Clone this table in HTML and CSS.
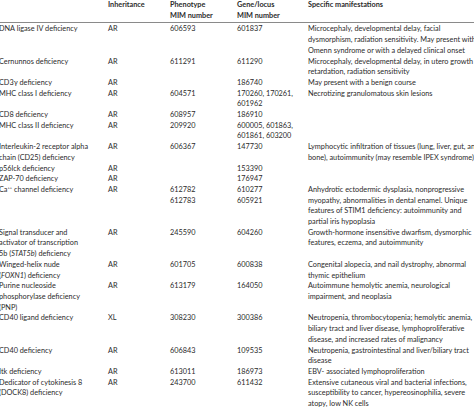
FILE: index.html
```html
<!DOCTYPE html>
<html>
<head>
<meta charset="utf-8">
<link rel="stylesheet" href="styles.css">
</head>
<body>
<table class="tbl">
<colgroup>
<col class="c1"><col class="c2"><col class="c3"><col class="c4"><col class="c5">
</colgroup>
<thead>
<tr><th></th><th>Inheritance</th><th>Phenotype<br>MIM number</th><th>Gene/locus<br>MIM number</th><th>Specific manifestations</th></tr>
</thead>
<tbody>
<tr><td>DNA ligase IV deficiency</td><td>AR</td><td>606593</td><td>601837</td><td>Microcephaly, developmental delay, facial<br>dysmorphism, radiation sensitivity. May present with<br>Omenn syndrome or with a delayed clinical onset</td></tr>
<tr><td>Cernunnos deficiency</td><td>AR</td><td>611291</td><td>611290</td><td>Microcephaly, developmental delay, in utero growth<br>retardation, radiation sensitivity</td></tr>
<tr><td>CD3γ deficiency</td><td>AR</td><td></td><td>186740</td><td>May present with a benign course</td></tr>
<tr><td>MHC class I deficiency</td><td>AR</td><td>604571</td><td>170260, 170261,<br>601962</td><td>Necrotizing granulomatous skin lesions</td></tr>
<tr><td>CD8 deficiency</td><td>AR</td><td>608957</td><td>186910</td><td></td></tr>
<tr><td>MHC class II deficiency</td><td>AR</td><td>209920</td><td>600005, 601863,<br>601861, 603200</td><td></td></tr>
<tr><td>Interleukin-2 receptor alpha<br>chain (CD25) deficiency</td><td>AR</td><td>606367</td><td>147730</td><td>Lymphocytic infiltration of tissues (lung, liver, gut, and<br>bone), autoimmunity (may resemble IPEX syndrome)</td></tr>
<tr><td>p56lck deficiency</td><td>AR</td><td></td><td>153390</td><td></td></tr>
<tr><td>ZAP-70 deficiency</td><td>AR</td><td></td><td>176947</td><td></td></tr>
<tr><td>Ca<sup>++</sup> channel deficiency</td><td>AR</td><td>612782<br>612783</td><td>610277<br>605921</td><td>Anhydrotic ectodermic dysplasia, nonprogressive<br>myopathy, abnormalities in dental enamel. Unique<br>features of STIM1 deficiency: autoimmunity and<br>partial iris hypoplasia</td></tr>
<tr><td>Signal transducer and<br>activator of transcription<br>5b (<i>STAT5b</i>) deficiency</td><td>AR</td><td>245590</td><td>604260</td><td>Growth-hormone insensitive dwarfism, dysmorphic<br>features, eczema, and autoimmunity</td></tr>
<tr><td>Winged-helix nude<br>(<i>FOXN1</i>) deficiency</td><td>AR</td><td>601705</td><td>600838</td><td>Congenital alopecia, and nail dystrophy, abnormal<br>thymic epithelium</td></tr>
<tr><td>Purine nucleoside<br>phosphorylase deficiency<br>(PNP)</td><td>AR</td><td>613179</td><td>164050</td><td>Autoimmune hemolytic anemia, neurological<br>impairment, and neoplasia</td></tr>
<tr><td>CD40 ligand deficiency</td><td>XL</td><td>308230</td><td>300386</td><td>Neutropenia, thrombocytopenia; hemolytic anemia,<br>biliary tract and liver disease, lymphoproliferative<br>disease, and increased rates of malignancy</td></tr>
<tr><td>CD40 deficiency</td><td>AR</td><td>606843</td><td>109535</td><td>Neutropenia, gastrointestinal and liver/biliary tract<br>disease</td></tr>
<tr><td>Itk deficiency</td><td>AR</td><td>613011</td><td>186973</td><td>EBV- associated lymphoproliferation</td></tr>
<tr><td>Dedicator of cytokinesis 8<br>(DOCK8) deficiency</td><td>AR</td><td>243700</td><td>611432</td><td>Extensive cutaneous viral and bacterial infections,<br>susceptibility to cancer, hypereosinophilia, severe<br>atopy, low NK cells</td></tr>
</tbody>
</table>
</body>
</html>
```
FILE: styles.css
```css
html, body {
  margin: 0;
  padding: 0;
  overflow: hidden;
  background: #fff;
}
body {
  width: 474px;
  height: 408px;
}
.tbl {
  border-collapse: collapse;
  table-layout: fixed;
  width: 520px;
  margin-left: -1px;
  font-family: Lato, "Liberation Sans", sans-serif;
  font-size: 7.3px;
  line-height: 10.7px;
  color: #2b2b2b;
}
.c1 { width: 109px; }
.c2 { width: 62px; }
.c3 { width: 67px; }
.c4 { width: 71px; }
.c5 { width: 211px; }
.tbl th {
  text-align: left;
  vertical-align: top;
  font-weight: bold;
  padding: 0 0 1px 0;
  border-bottom: 1px solid #8a8a8a;
  white-space: nowrap;
}
.tbl td {
  vertical-align: top;
  padding: 0;
  white-space: nowrap;
}
.tbl tbody tr:first-child td {
  padding-top: 1px;
}
.tbl sup {
  font-size: 4px;
  line-height: 0;
  vertical-align: 3px;
}
```
